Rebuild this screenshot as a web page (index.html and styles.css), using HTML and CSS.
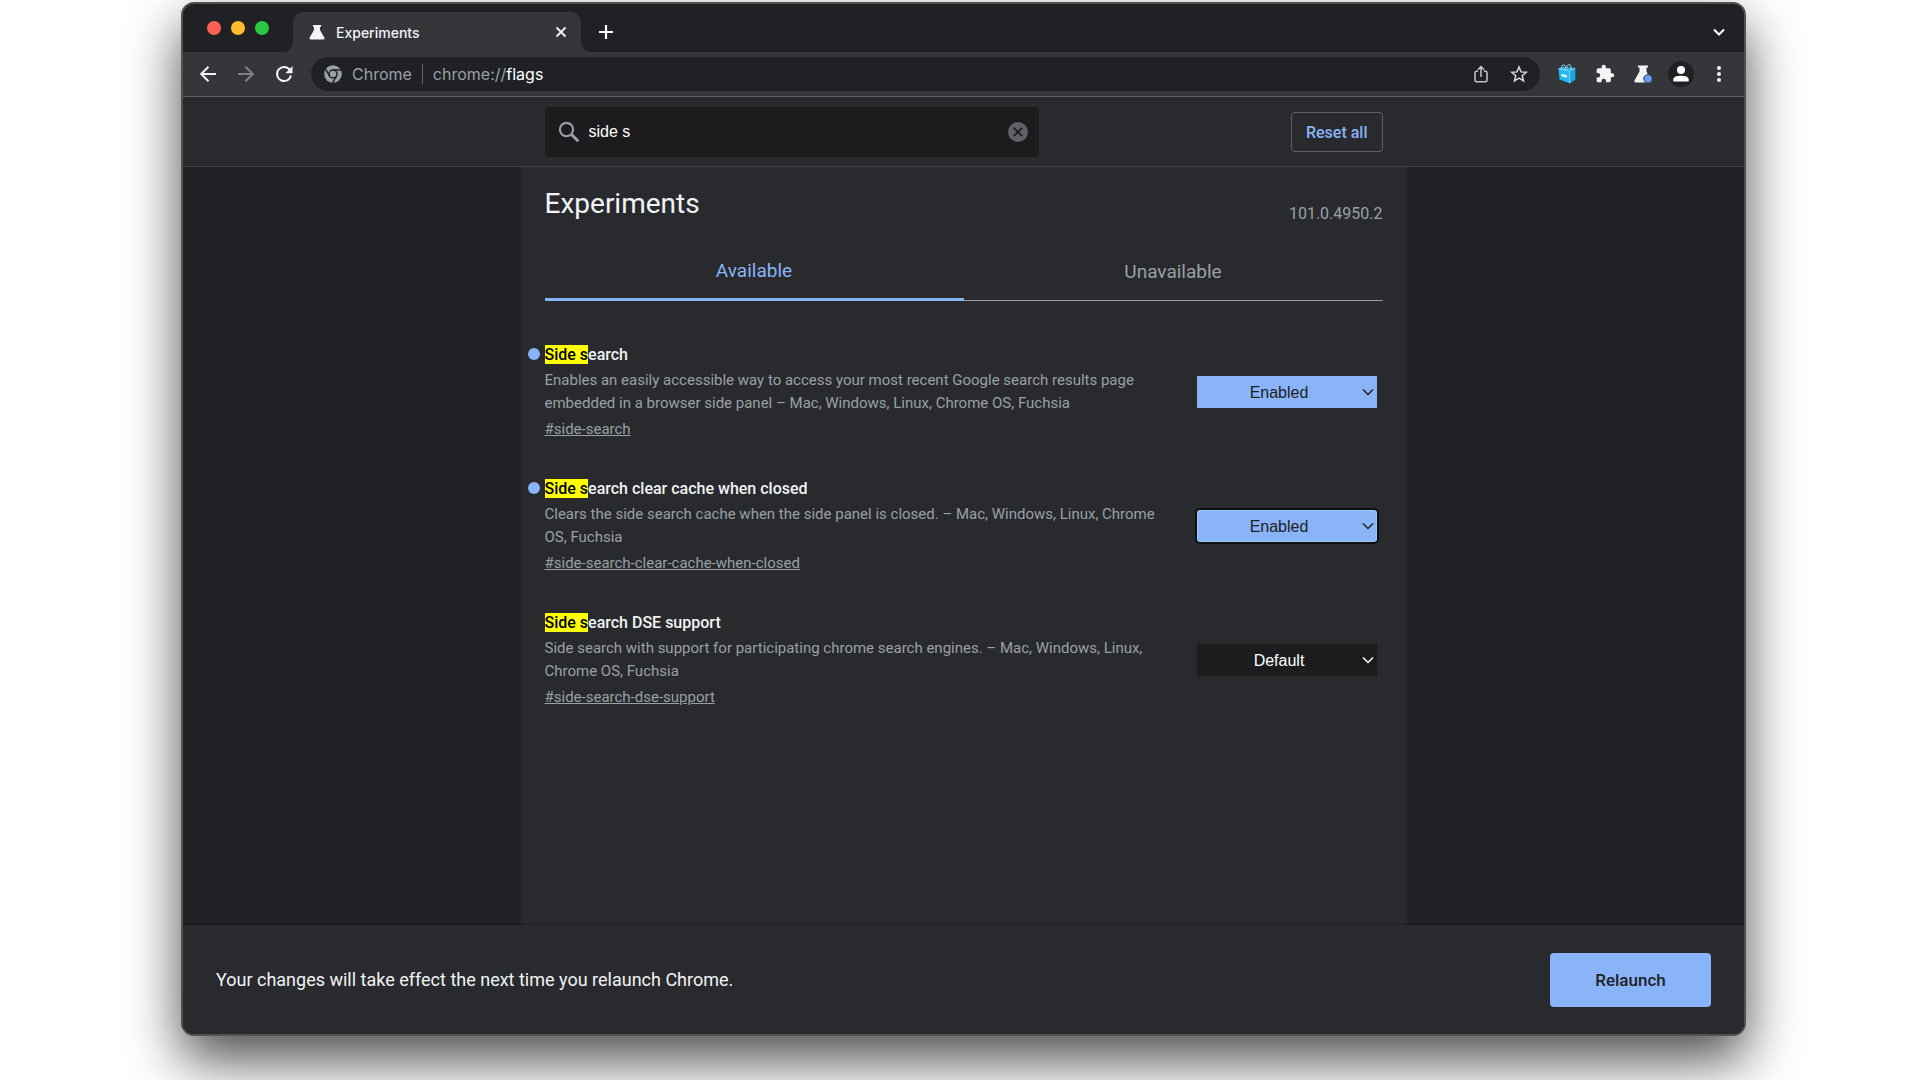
FILE: index.html
```html
<!DOCTYPE html>
<html lang="en">
<head>
    <title>Experiments</title>
    <meta charset="UTF-8">
    <meta name="viewport" content="width=device-width, initial-scale=1">
    <link rel="stylesheet" href="styles.css">
</head>
<body>

<div class="window">

    <div class="tabstrip">
        <div class="lights">
            <span class="light red"></span>
            <span class="light yellow"></span>
            <span class="light green"></span>
        </div>
        <div class="tab">
            <svg width="16" height="16" viewBox="0 0 16 16"><path fill="#f1f3f4" d="M4 1h8v2h-1v3l4.300 7.500Q16.200 15.600 14 15.600H2Q-.2 15.600.7 13.500L5 6V3H4z"/></svg>
            <span class="tab-title">Experiments</span>
            <button class="icon-btn tab-close" aria-label="Close tab">
                <svg width="16" height="16" viewBox="0 0 16 16"><path fill="none" stroke="#f1f3f4" stroke-width="1.800" d="M3.500 3.500l9 9M12.500 3.500l-9 9"/></svg>
            </button>
        </div>
        <button class="icon-btn new-tab" aria-label="New tab">
            <svg width="18" height="18" viewBox="0 0 18 18"><path fill="none" stroke="#fff" stroke-width="2.200" d="M9 2v14M2 9h14"/></svg>
        </button>
        <button class="icon-btn tab-search" aria-label="Search tabs">
            <svg width="14" height="14" viewBox="0 0 14 14"><path fill="none" stroke="#fff" stroke-width="2" d="M2 4.500l5 5 5-5"/></svg>
        </button>
    </div>

    <div class="toolbar">
        <div class="nav">
            <button class="icon-btn" aria-label="Back">
                <svg width="18" height="18" viewBox="0 0 18 18"><path fill="none" stroke="#f1f3f4" stroke-width="2" d="M17 9H2.500M9.500 1.700L2.200 9l7.300 7.300"/></svg>
            </button>
            <button class="icon-btn" aria-label="Forward">
                <svg width="18" height="18" viewBox="0 0 18 18"><path fill="none" stroke="#7f8184" stroke-width="2" d="M1 9h14.500M8.500 1.700L15.800 9l-7.300 7.300"/></svg>
            </button>
            <button class="icon-btn" aria-label="Reload">
                <svg width="18" height="18" viewBox="0 0 18 18"><path fill="none" stroke="#f1f3f4" stroke-width="2" d="M14.800 5A7 7 0 1 0 15.900 10.500"/><path fill="#f1f3f4" d="M17.500 1v7.200h-7.200z"/></svg>
            </button>
        </div>
        <div class="omnibox">
            <svg width="18" height="18" viewBox="0 0 18 18"><circle cx="9" cy="9" r="8.800" fill="#9aa0a6"/><g fill="none" stroke="#202124" stroke-width="1.500"><circle cx="9" cy="9" r="4"/><path d="M9 5h8M5.500 11L1.600 4.200M12.500 11L8.600 17.800"/></g></svg>
            <span class="scheme">Chrome</span>
            <span class="divider"></span>
            <span class="url">chrome://<b>flags</b></span>
            <button class="icon-btn share" aria-label="Share">
                <svg width="16" height="18" viewBox="0 0 16 18"><path fill="none" stroke="#c4c7ca" stroke-width="1.500" d="M5 6.200H3.500Q2 6.200 2 7.700v7.600q0 1.500 1.500 1.500h9q1.500 0 1.500-1.500V7.700q0-1.500-1.500-1.500H11M8 12V1.800M4.900 4.700L8 1.600l3.100 3.100"/></svg>
            </button>
            <button class="icon-btn star" aria-label="Bookmark this tab">
                <svg width="18" height="18" viewBox="0 0 18 18"><path fill="none" stroke="#d5d7da" stroke-width="1.500" d="M9 2l2 4.900 5.300.4-4.100 3.400 1.300 5.200L9 13.100l-4.500 2.800 1.300-5.200L1.700 7.300 7 6.900z"/></svg>
            </button>
        </div>
        <div class="actions">
            <button class="icon-btn" aria-label="Shopping extension">
                <svg width="20" height="20" viewBox="0 0 20 20"><path fill="#20b8ee" d="M1.500 4.500L6 3l12.200 1v11.500l-5.500 3.700L2.500 15.500z"/><path fill="#16a9e0" d="M12.500 7l5.700-3v11.500l-5.500 3.700z"/><path fill="none" stroke="#8bd3ee" d="M1.500 4.500l11 2.500.2 12.200M4.500 6V3q0-2 2-2t2 2v4M10 5V3q0-2.300 2-2.300T14 3v3M12.500 7l5.700-3"/><path fill="#dff5fd" d="M4.500 9.800l5.500 1.400v2.500l-5.500-1.400z"/></svg>
            </button>
            <button class="icon-btn" aria-label="Extensions">
                <svg width="20" height="20" viewBox="0 0 24 24"><path fill="#f1f3f4" d="M20.500 11H19V7a2 2 0 0 0-2-2h-4V3.500a2.500 2.500 0 0 0-5 0V5H4a2 2 0 0 0-2 2v3.800h1.500a2.700 2.700 0 0 1 0 5.400H2V20a2 2 0 0 0 2 2h3.800v-1.500a2.700 2.700 0 0 1 5.400 0V22H17a2 2 0 0 0 2-2v-4h1.500a2.500 2.500 0 0 0 0-5z"/></svg>
            </button>
            <button class="icon-btn" aria-label="Experiments in the browser">
                <svg width="20" height="20" viewBox="0 0 20 20"><path fill="#f1f3f4" d="M5 1.500h10v2h-1.500v4l4.700 9Q19 18.500 17 18.500H2.500Q.7 18.500 1.500 16.500L6.500 7.500v-4H5z"/><circle cx="15" cy="14.800" r="4.200" fill="#669df6" stroke="#35363a"/></svg>
            </button>
            <button class="icon-btn avatar" aria-label="Profile">
                <svg width="16" height="16" viewBox="0 0 16 16"><circle cx="8" cy="4" r="4" fill="#fff"/><path fill="#fff" d="M.3 15.500v-2.300Q.8 9.800 8 9.800t7.700 3.400v2.300z"/></svg>
            </button>
            <button class="icon-btn" aria-label="Menu">
                <svg width="18" height="18" viewBox="0 0 18 18"><g fill="#f1f3f4"><circle cx="9" cy="3" r="2"/><circle cx="9" cy="9" r="2"/><circle cx="9" cy="15" r="2"/></g></svg>
            </button>
        </div>
    </div>

    <div class="header">
        <div class="header-inner">
            <div class="search">
                <svg width="22" height="22" viewBox="0 0 22 22"><g fill="none" stroke="#9aa0a6" stroke-width="2.200"><circle cx="8.500" cy="8.500" r="6.600"/><path stroke-width="3" d="M13.300 13.300l7 7"/></g></svg>
                <input type="text" value="side s" aria-label="Search flags">
                <button class="icon-btn" aria-label="Clear search">
                    <svg width="20" height="20" viewBox="0 0 20 20"><circle cx="10" cy="10" r="10" fill="#5f6368"/><path fill="none" stroke="#1c1c1e" stroke-width="1.800" d="M5.800 5.800l8.400 8.400M14.200 5.800l-8.400 8.400"/></svg>
                </button>
            </div>
            <button class="reset">Reset all</button>
        </div>
    </div>

    <main class="body">
        <div class="content">
            <div class="title-row">
                <h1>Experiments</h1>
                <span class="version">101.0.4950.2</span>
            </div>

            <div class="tabs" role="tablist">
                <button class="page-tab selected" role="tab" aria-selected="true">Available</button>
                <button class="page-tab" role="tab" aria-selected="false">Unavailable</button>
            </div>

            <div class="experiment changed">
                <div class="info">
                    <h2 id="t1"><mark>Side s</mark>earch</h2>
                    <p>Enables an easily accessible way to access your most recent Google search results page embedded in a browser side panel – Mac, Windows, Linux, Chrome OS, Fuchsia</p>
                    <a href="#side-search">#side-search</a>
                </div>
                <div class="picker">
                    <select aria-labelledby="t1">
                        <option>Default</option>
                        <option selected>Enabled</option>
                        <option>Disabled</option>
                    </select>
                    <svg width="12" height="8" viewBox="0 0 12 8"><path d="M1 1.500l5 5 5-5"/></svg>
                </div>
            </div>

            <div class="experiment changed">
                <div class="info">
                    <h2 id="t2"><mark>Side s</mark>earch clear cache when closed</h2>
                    <p>Clears the side search cache when the side panel is closed. – Mac, Windows, Linux, Chrome OS, Fuchsia</p>
                    <a href="#side-search-clear-cache-when-closed">#side-search-clear-cache-when-closed</a>
                </div>
                <div class="picker focused">
                    <select aria-labelledby="t2">
                        <option>Default</option>
                        <option selected>Enabled</option>
                        <option>Disabled</option>
                    </select>
                    <svg width="12" height="8" viewBox="0 0 12 8"><path d="M1 1.500l5 5 5-5"/></svg>
                </div>
            </div>

            <div class="experiment">
                <div class="info">
                    <h2 id="t3"><mark>Side s</mark>earch DSE support</h2>
                    <p>Side search with support for participating chrome search engines. – Mac, Windows, Linux, Chrome OS, Fuchsia</p>
                    <a href="#side-search-dse-support">#side-search-dse-support</a>
                </div>
                <div class="picker">
                    <select aria-labelledby="t3">
                        <option selected>Default</option>
                        <option>Enabled</option>
                        <option>Disabled</option>
                    </select>
                    <svg width="12" height="8" viewBox="0 0 12 8"><path d="M1 1.500l5 5 5-5"/></svg>
                </div>
            </div>
        </div>
    </main>

    <div class="footer">
        <span>Your changes will take effect the next time you relaunch Chrome.</span>
        <button class="relaunch">Relaunch</button>
    </div>

</div>

</body>
</html>
```
FILE: styles.css
```css
*, *:before, *:after {
    box-sizing: border-box;
}

body {
    margin: 0;
    padding: 2px 174px 44px 181px;
    min-height: 100vh;
    display: flex;
    background: #fff;
    font-family: Roboto, Arial, sans-serif;
    font-size: 16px;
    color: #f1f3f4;
    overflow: hidden;
}

button, input, select {
    font-family: inherit;
    font-size: inherit;
    margin: 0;
}

svg {
    display: block;
    flex: none;
}

.window {
    flex: 1;
    display: flex;
    flex-direction: column;
    border: 2px solid #505154;
    border-radius: 13px;
    background: #202124;
    overflow: hidden;
    box-shadow: 0 24px 54px rgba(0, 0, 0, 0.7);
}

.icon-btn {
    display: flex;
    align-items: center;
    justify-content: center;
    flex: none;
    width: 26px;
    height: 26px;
    padding: 0;
    border: 0;
    border-radius: 50%;
    background: none;
}

/* tab strip */

.tabstrip {
    display: flex;
    align-items: center;
    height: 48px;
    padding: 8px 12px 0 24px;
}

.lights {
    display: flex;
    gap: 10px;
    width: 86px;
    padding-bottom: 8px;
}

.light {
    width: 14px;
    height: 14px;
    border-radius: 50%;
}

.red {
    background: #ff5f57;
}

.yellow {
    background: #febc2e;
}

.green {
    background: #28c840;
}

.tab {
    position: relative;
    display: flex;
    align-items: center;
    gap: 11px;
    width: 288px;
    height: 40px;
    padding: 0 7px 0 16px;
    border-radius: 10px 10px 0 0;
    background: #35363a;
    font-family: Inter, sans-serif;
    font-size: 14px;
}

/* inverted corners at the foot of the tab */
.tab:before, .tab:after {
    content: "";
    position: absolute;
    bottom: 0;
    width: 10px;
    height: 10px;
}

.tab:before {
    right: 100%;
    background: radial-gradient(circle at 0 0, transparent 10px, #35363a 10px);
}

.tab:after {
    left: 100%;
    background: radial-gradient(circle at 100% 0, transparent 10px, #35363a 10px);
}

.tab-title {
    font-weight: 500;
}

.tab-close, .tab-search {
    margin-left: auto;
}

.new-tab {
    margin-left: 12px;
}

/* toolbar */

.toolbar {
    display: flex;
    align-items: center;
    height: 45px;
    padding: 0 12px;
    background: #35363a;
    border-bottom: 1px solid #5f6063;
}

.nav, .actions {
    display: flex;
    gap: 12px;
}

.omnibox {
    flex: 1;
    display: flex;
    align-items: center;
    height: 34px;
    margin: 0 14px;
    padding: 0 8px 0 13px;
    border-radius: 17px;
    background: #202124;
    color: #9aa0a6;
    font-family: Inter, sans-serif;
}

.scheme {
    margin-left: 10px;
}

.divider {
    width: 1px;
    height: 20px;
    margin: 0 10px;
    background: #5f6368;
}

.url b {
    font-weight: 400;
    color: #fff;
}

.share {
    margin-left: auto;
    margin-right: 12px;
}

.avatar {
    background: #202124;
}

/* search header */

.header {
    padding: 10px 24px 9px;
    background: #292a2d;
    border-bottom: 1px solid #404144;
}

.header-inner {
    display: flex;
    align-items: center;
    justify-content: space-between;
    max-width: 838px;
    margin: 0 auto;
}

.search {
    display: flex;
    align-items: center;
    gap: 9px;
    width: 494px;
    height: 50px;
    padding: 0 8px 0 13px;
    border-radius: 3px;
    background: #1c1c1e;
}

.search input {
    flex: 1;
    min-width: 0;
    padding: 0;
    border: 0;
    outline: 0;
    background: none;
    color: #fff;
    font-family: "Liberation Sans", Arial, sans-serif;
}

.reset {
    height: 40px;
    padding: 0 14px;
    border: 1px solid #5f6368;
    border-radius: 4px;
    background: none;
    color: #8ab4f8;
    font-weight: 500;
}

/* page */

.body {
    flex: 1;
    display: flex;
    justify-content: center;
}

.content {
    flex: 0 1 886px;
    padding: 16px 24px;
    background: #292a2d;
}

.title-row {
    display: flex;
    justify-content: space-between;
    align-items: flex-end;
    height: 42px;
}

h1 {
    margin: 0;
    font-size: 28px;
    line-height: 42px;
    font-weight: 400;
}

.version {
    color: #9aa0a6;
    line-height: 22px;
}

.tabs {
    display: flex;
    margin-top: 20px;
    margin-bottom: 42px;
}

.page-tab {
    flex: 1;
    height: 56px;
    padding: 0 0 2px;
    border: 0;
    border-bottom: 1px solid #9aa0a6;
    background: none;
    color: #9aa0a6;
    font-size: 19px;
}

.page-tab.selected {
    border-bottom: 3px solid #8ab4f8;
    color: #8ab4f8;
}

.experiment {
    display: flex;
    align-items: center;
    justify-content: space-between;
    margin-bottom: 36px;
}

.info {
    position: relative;
    flex: 0 1 630px;
    color: #9aa0a6;
    font-size: 15px;
}

.changed .info:before {
    content: "";
    position: absolute;
    left: -17px;
    top: 5px;
    width: 12px;
    height: 12px;
    border-radius: 50%;
    background: #8ab4f8;
}

h2 {
    margin: 0 0 3px;
    color: #f1f3f4;
    font-size: 16px;
    line-height: 23px;
    font-weight: 500;
}

mark {
    background: #ff0;
    color: #000;
}

.info p {
    margin: 0 0 3px;
    line-height: 23px;
}

.info a {
    display: block;
    color: inherit;
    line-height: 23px;
}

.picker {
    position: relative;
    width: 180px;
    margin-right: 6px;
}

.picker select {
    display: block;
    appearance: none;
    width: 100%;
    height: 32px;
    padding: 0 15px 0 0;
    border: 0;
    border-radius: 0;
    background: #1c1c1e;
    color: #fff;
    font-family: "Liberation Sans", Arial, sans-serif;
    text-align: center;
    text-align-last: center;
}

.picker svg {
    position: absolute;
    right: 3px;
    top: 12px;
    fill: none;
    stroke: #fff;
    stroke-width: 1.500;
    pointer-events: none;
}

.changed .picker select {
    background: #8ab4f8;
    color: #202124;
}

.changed .picker svg {
    stroke: #202124;
}

.focused select {
    outline: 2px solid #101012;
    border-radius: 3px;
    box-shadow: inset 0 0 0 1px #99c8ff, 0 0 0 1px #99c8ff;
}

/* relaunch bar */

.footer {
    display: flex;
    align-items: center;
    justify-content: space-between;
    height: 109px;
    padding: 0 33px;
    background: #292a2d;
    box-shadow: 0 -1px 2px rgba(0, 0, 0, 0.3);
    font-size: 18px;
}

.relaunch {
    width: 161px;
    height: 54px;
    border: 0;
    border-radius: 4px;
    background: #8ab4f8;
    color: #202124;
    font-size: 17px;
    font-weight: 500;
}
```
